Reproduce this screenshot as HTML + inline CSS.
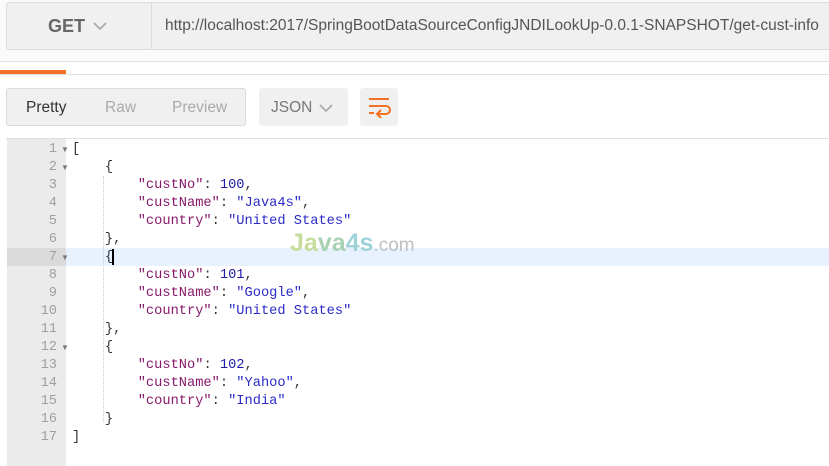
<!DOCTYPE html>
<html><head><meta charset="utf-8"><style>
*{margin:0;padding:0;box-sizing:border-box}
body{width:829px;height:466px;background:#fff;position:relative;overflow:hidden;font-family:"Liberation Sans",sans-serif}
.abs{position:absolute}
.top{left:0;top:0;width:829px;height:62px;background:#fafafa;border-bottom:1px solid #e2e2e2}
.bar{left:6px;top:2px;width:830px;height:48px;background:#f0f0f0;border:1px solid #dcdcdc;border-radius:3px}
.get{left:6px;top:2px;width:146px;height:48px;border-right:1px solid #dcdcdc}
.code{font-family:"Liberation Mono",monospace;font-size:13.7px;line-height:18px;white-space:pre}
.ln{position:absolute;left:0;width:50px;text-align:right;color:#a0a0a0;font-family:"Liberation Mono",monospace;font-size:13.7px;line-height:18px}
.ar{position:absolute;left:54px;color:#777;font-size:8px;line-height:18px}
.k{color:#881a6b}.n{color:#1c1ca6}.s{color:#2a2ac8}.p{color:#333}
</style></head><body>
<div class="abs top"></div>
<div class="abs bar"></div>
<div class="abs get"></div>
<div class="abs" style="left:48px;top:16px;font-size:18px;color:#666;font-weight:bold">GET</div>
<svg class="abs" style="left:92px;top:21px" width="16" height="10"><path d="M2 2 L8 8 L14 2" stroke="#aaa" stroke-width="1.8" fill="none"/></svg>
<div class="abs" style="left:165px;top:17px;font-size:15.5px;color:#555;white-space:nowrap">http://localhost:2017/SpringBootDataSourceConfigJNDILookUp-0.0.1-SNAPSHOT/get-cust-info</div>
<div class="abs" style="left:0;top:70px;width:66px;height:4px;background:#f47023"></div>
<div class="abs" style="left:0;top:74px;width:829px;height:1px;background:#e0e0e0"></div>
<div class="abs" style="left:6px;top:88px;width:240px;height:38px;background:#f0f0f0;border:1px solid #dadada;border-radius:3px"></div>
<div class="abs" style="left:26px;top:99px;font-size:15.5px;color:#333">Pretty</div>
<div class="abs" style="left:105px;top:99px;font-size:15.5px;color:#aaa">Raw</div>
<div class="abs" style="left:172px;top:99px;font-size:15.5px;color:#aaa">Preview</div>
<div class="abs" style="left:259px;top:88px;width:89px;height:38px;background:#f0f0f0;border-radius:3px"></div>
<div class="abs" style="left:271px;top:99px;font-size:15.5px;color:#777">JSON</div>
<svg class="abs" style="left:318px;top:103px" width="16" height="10"><path d="M2 2 L8 8 L14 2" stroke="#aaa" stroke-width="1.8" fill="none"/></svg>
<div class="abs" style="left:360px;top:88px;width:38px;height:38px;background:#f0f0f0;border-radius:3px"></div>
<svg class="abs" style="left:368px;top:96px" width="24" height="22"><path d="M1 3 H21 M1 10 H18 a4 4 0 0 1 0 8 H10 M13 14 L9 18 L13 22 M1 17 H6" stroke="#f47023" stroke-width="2" fill="none"/></svg>
<div class="abs" style="left:6px;top:138px;width:823px;height:1px;background:#e0e0e0"></div>
<div class="abs" style="left:7px;top:139px;width:59px;height:327px;background:#ebebeb"></div>
<div class="abs" style="left:66px;top:248px;width:763px;height:18px;background:#e8f2fe"></div>
<div class="abs" style="left:7px;top:248px;width:59px;height:18px;background:#dadada"></div>
<div class="abs" style="left:7px;top:141px;width:59px">
<div class="ln" style="top:0">1</div><div class="ar" style="top:0">▼</div>
<div class="ln" style="top:18px">2</div><div class="ar" style="top:18px">▼</div>
<div class="ln" style="top:36px">3</div><div class="ln" style="top:54px">4</div><div class="ln" style="top:72px">5</div><div class="ln" style="top:90px">6</div>
<div class="ln" style="top:108px">7</div><div class="ar" style="top:108px">▼</div>
<div class="ln" style="top:126px">8</div><div class="ln" style="top:144px">9</div><div class="ln" style="top:162px">10</div><div class="ln" style="top:180px">11</div>
<div class="ln" style="top:198px">12</div><div class="ar" style="top:198px">▼</div>
<div class="ln" style="top:216px">13</div><div class="ln" style="top:234px">14</div><div class="ln" style="top:252px">15</div><div class="ln" style="top:270px">16</div><div class="ln" style="top:288px">17</div>
</div>
<div class="abs" style="left:103px;top:176px;height:246px;border-left:1px dotted #ccc"></div>
<div class="abs" style="left:290px;top:229px;font-size:25px;font-weight:bold;white-space:nowrap"><span style="color:#c6dd9e">Ja</span><span style="color:#a9d2b4">va</span><span style="color:#9fd3d8">4s</span><span style="color:#c0c0c0;font-size:19px;font-weight:normal">.com</span></div>
<div class="abs code p" style="left:72px;top:141px">[
    {
        <span class="k">"custNo"</span>: <span class="n">100</span>,
        <span class="k">"custName"</span>: <span class="s">"Java4s"</span>,
        <span class="k">"country"</span>: <span class="s">"United States"</span>
    },
    {
        <span class="k">"custNo"</span>: <span class="n">101</span>,
        <span class="k">"custName"</span>: <span class="s">"Google"</span>,
        <span class="k">"country"</span>: <span class="s">"United States"</span>
    },
    {
        <span class="k">"custNo"</span>: <span class="n">102</span>,
        <span class="k">"custName"</span>: <span class="s">"Yahoo"</span>,
        <span class="k">"country"</span>: <span class="s">"India"</span>
    }
]</div>
<div class="abs" style="left:112px;top:249px;width:2px;height:16px;background:#000"></div>
</body></html>
